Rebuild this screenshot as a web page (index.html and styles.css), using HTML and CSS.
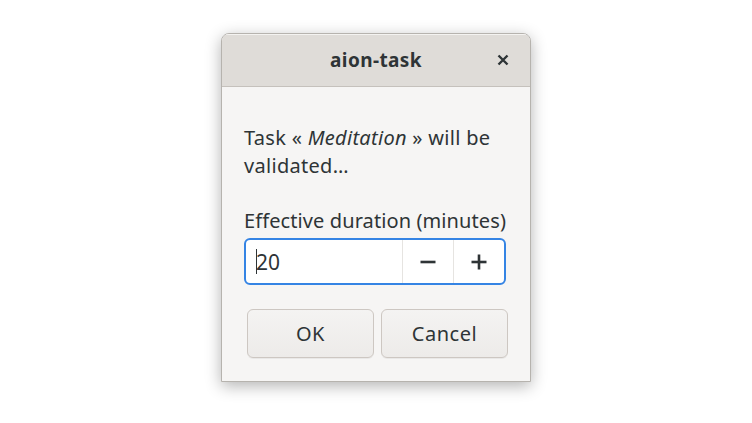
FILE: index.html
```html
<!DOCTYPE html>
<html>
<head>
<meta charset="utf-8">
<link rel="stylesheet" href="styles.css">
</head>
<body>
<div class="stage">
  <div class="dialog">
    <div class="titlebar">
      <span class="title">aion-task</span>
      <span class="close">
        <svg width="12" height="12" viewBox="0 0 12 12"><path d="M1.5 1.5 L10.5 10.5 M10.5 1.5 L1.5 10.5" stroke="#2e3436" stroke-width="2.4" stroke-linecap="butt"/></svg>
      </span>
    </div>
    <div class="body">
      <p class="msg">Task « <em>Meditation</em> » will be validated…</p>
      <label class="lbl">Effective duration (minutes)</label>
      <div class="spin">
        <div class="entry"><span class="caret"></span>20</div>
        <div class="sbtn">
          <svg width="16" height="16" viewBox="0 0 16 16"><rect x="0.5" y="6.7" width="15" height="2.6" fill="#2e3436"/></svg>
        </div>
        <div class="sbtn">
          <svg width="16" height="16" viewBox="0 0 16 16"><rect x="0.5" y="6.7" width="15" height="2.6" fill="#2e3436"/><rect x="6.7" y="0.5" width="2.6" height="15" fill="#2e3436"/></svg>
        </div>
      </div>
      <div class="buttons">
        <button class="btn">OK</button>
        <button class="btn">Cancel</button>
      </div>
    </div>
  </div>
</div>
</body>
</html>
```
FILE: styles.css
```css
html, body {
  margin: 0;
  padding: 0;
  background: #ffffff;
}
body {
  width: 752px;
  height: 423px;
  font-family: "Noto Sans", "Open Sans", sans-serif;
  color: #2e3436;
}
.stage {
  padding-top: 33px;
  padding-left: 221px;
}
.dialog {
  width: 308px;
  height: 347px;
  border: 1px solid #b6b3ae;
  border-radius: 8px 8px 0 0;
  background: #f6f5f4;
  box-shadow: 0 4px 16px rgba(0,0,0,0.3);
  display: flex;
  flex-direction: column;
  overflow: hidden;
}
.titlebar {
  height: 52px;
  flex: none;
  background: #dfdcd8;
  border-bottom: 1px solid #c5c1bc;
  display: flex;
  align-items: center;
  justify-content: center;
  position: relative;
  box-shadow: inset 0 1px #f4f3f1;
}
.title {
  font-weight: bold;
  font-size: 19px;
  letter-spacing: 0.4px;
  color: #2e3436;
}
.close {
  position: absolute;
  right: 21px;
  top: 20px;
  width: 12px;
  height: 12px;
  display: flex;
}
.body {
  padding: 37px 22px 0 22px;
  display: flex;
  flex-direction: column;
}
.msg {
  margin: 0;
  font-size: 20px;
  line-height: 28px;
  width: 275px;
  letter-spacing: 0.3px;
}
.msg em {
  font-style: italic;
}
.lbl {
  margin-top: 27px;
  font-size: 20px;
  line-height: 28px;
  white-space: nowrap;
  letter-spacing: 0.1px;
}
.spin {
  margin-top: 3px;
  width: 258px;
  height: 43px;
  border: 2px solid #3584e4;
  border-radius: 6px;
  background: #ffffff;
  display: flex;
  align-items: stretch;
}
.entry {
  flex: 1;
  display: flex;
  align-items: center;
  padding-left: 10px;
  font-size: 21px;
  position: relative;
}
.caret {
  position: absolute;
  left: 10px;
  top: 9px;
  width: 1px;
  height: 25px;
  background: #2e3436;
}
.sbtn {
  width: 50px;
  border-left: 1px solid #e6e4e1;
  display: flex;
  align-items: center;
  justify-content: center;
}
.buttons {
  margin-top: 24px;
  display: flex;
  gap: 7px;
  padding-left: 3px;
}
.btn {
  width: 127px;
  height: 49px;
  border: 1px solid #cdc7c2;
  border-radius: 6px;
  background: linear-gradient(#f4f3f2, #edebe9);
  box-shadow: 0 1px rgba(0,0,0,0.05);
  font-family: "Noto Sans", "Open Sans", sans-serif;
  font-size: 20px;
  letter-spacing: 0.5px;
  color: #2e3436;
  padding: 0;
}
```
